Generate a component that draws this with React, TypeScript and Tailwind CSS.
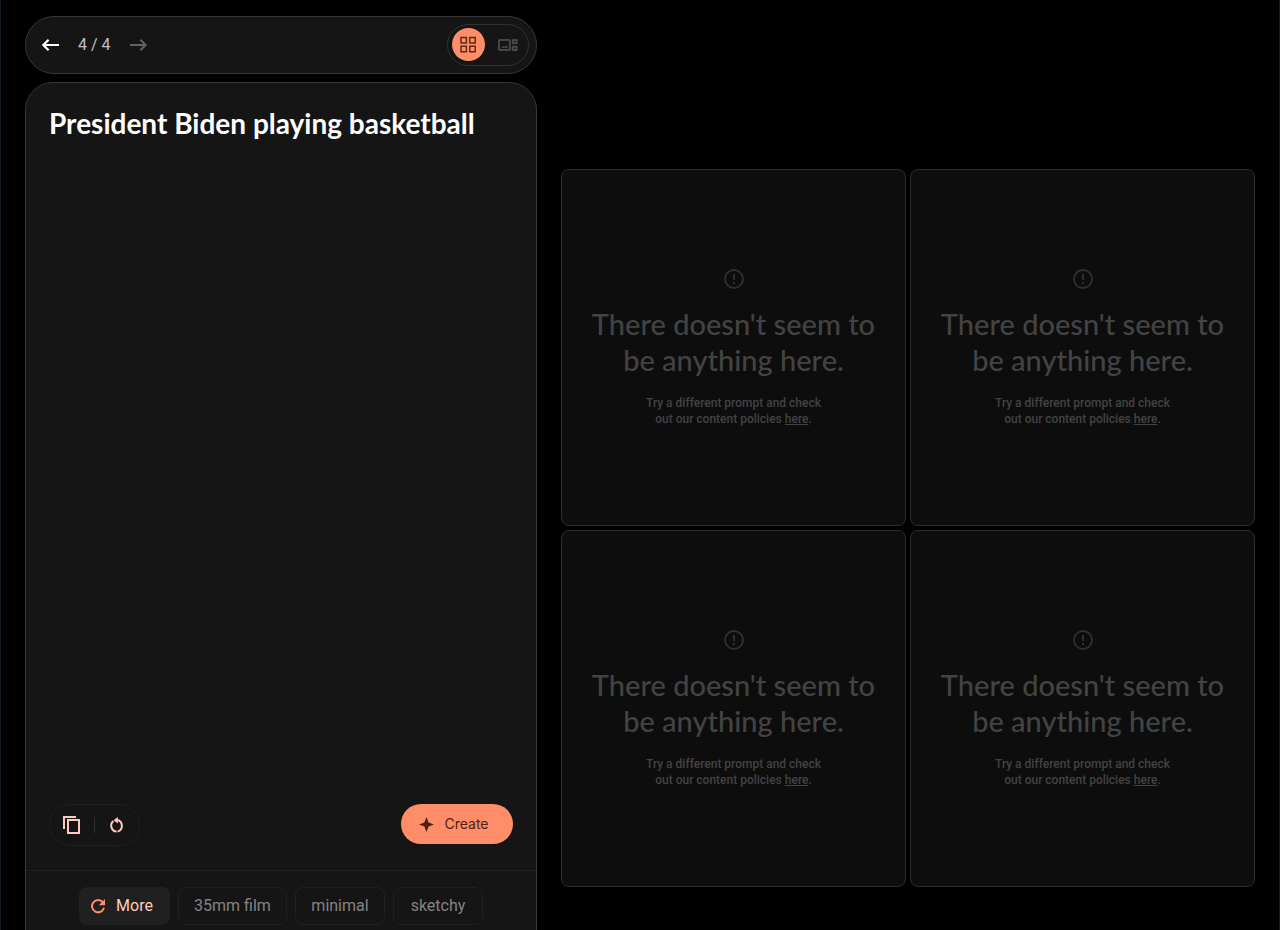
import React, { useState } from 'react';

interface Chip {
  label: string;
  width: string;
}

const chips: Chip[] = [
  { label: '35mm film', width: 'w-[109px]' },
  { label: 'minimal', width: 'w-[90px]' },
  { label: 'sketchy', width: 'w-[90px]' },
];

const ArrowIcon: React.FC<{ className?: string; strokeWidth: number }> = ({ className, strokeWidth }) => (
  <svg className={className} width="17" height="12" viewBox="0 0 17 12" fill="none" stroke="currentColor" strokeWidth={strokeWidth} aria-hidden="true">
    <path d="M17 6H1.8M6.6.8 1.4 6l5.2 5.2" />
  </svg>
);

const GridIcon = () => (
  <svg width="17" height="17" viewBox="0 0 17 17" fill="none" stroke="currentColor" strokeWidth="1.5" aria-hidden="true">
    <path d="M1 1.5h5.4v5.4H1zM9.8 1.5h5.4v5.4H9.8zM1 10.3h5.4v5.4H1zM9.8 10.3h5.4v5.4H9.8z" />
  </svg>
);

const GalleryIcon = () => (
  <svg width="20" height="12" viewBox="0 0 20 12" fill="none" stroke="currentColor" aria-hidden="true">
    <rect x="1" y="1" width="10.8" height="10" rx="0.8" strokeWidth="2" />
    <path d="M3.2 9 5 6.8l1.3 1.4L8 6l2 3z" fill="currentColor" stroke="none" />
    <rect x="14.8" y="1" width="3.8" height="3.2" strokeWidth="2" />
    <rect x="14.8" y="7.8" width="3.8" height="3.2" strokeWidth="2" />
  </svg>
);

const CopyIcon = () => (
  <svg width="18" height="18" viewBox="0 0 18 18" fill="none" stroke="currentColor" strokeWidth="2" aria-hidden="true">
    <path d="M5 4h11v13H5z" />
    <path d="M1 13V1h12" />
  </svg>
);

const ResetIcon = () => (
  <svg width="16" height="16" viewBox="0 0 16 16" aria-hidden="true">
    <path d="M4.4 4A6 6 0 0 0 7.6 14.6M8.6 14.6A6 6 0 0 0 8.2 3" fill="none" stroke="currentColor" strokeWidth="2" />
    <path d="M8.8 0v6.4L4.6 3.2z" fill="currentColor" />
  </svg>
);

const MoreIcon = () => (
  <svg width="16" height="16" viewBox="0 0 16 16" aria-hidden="true">
    <path d="M12.9 4.4A6.1 6.1 0 1 0 14 9.8" fill="none" stroke="currentColor" strokeWidth="2" />
    <path d="M15 1v6.2H8.8z" fill="currentColor" />
  </svg>
);

const SparkIcon = () => (
  <svg width="15" height="15" viewBox="0 0 15 15" fill="currentColor" aria-hidden="true">
    <path d="M7.5 0 9.6 5.4 15 7.5 9.6 9.6 7.5 15 5.4 9.6 0 7.5 5.4 5.4z" />
  </svg>
);

const ErrorIcon = () => (
  <svg width="20" height="20" viewBox="0 0 20 20" fill="none" stroke="currentColor" aria-hidden="true">
    <circle cx="10" cy="10" r="9" strokeWidth="1.8" />
    <path d="M10 5v6M10 13v2" strokeWidth="2" />
  </svg>
);

const EmptyCard = () => (
  <div className="flex h-[357px] flex-col items-center rounded-lg border border-[#2d2d2d] bg-[#0d0d0d] px-6 pt-[99px] text-center text-[#434343]">
    <div className="text-[#303030]">
      <ErrorIcon />
    </div>
    <h2 className="mt-[17px] max-w-[296px] font-['Lato',sans-serif] text-[29px] leading-9 font-medium">There doesn't seem to be anything here.</h2>
    <p className="mt-[17px] text-xs leading-4 font-medium">
      Try a different prompt and check
      <br />
      out our content policies <a href="#policies" className="underline">here</a>.
    </p>
  </div>
);

const App: React.FC = () => {
  const [prompt, setPrompt] = useState<string>('President Biden playing basketball');

  return (
    <div className="h-screen overflow-hidden border-x border-l-[#101b24] border-r-[#1c1c1c] bg-black font-['Roboto',sans-serif]">
      <main className="flex h-[1056px] gap-6 px-6 py-4">
        <section className="flex w-[40vw] shrink-0 flex-col gap-2">
          <nav className="flex h-[58px] shrink-0 items-center justify-between rounded-full border border-[#373737] bg-[#151515] pr-[7px] pl-4">
            <div className="flex items-center gap-[19px]">
              <button type="button" aria-label="Previous" className="text-white">
                <ArrowIcon strokeWidth={2.2} />
              </button>
              <span className="text-base text-[#bdc1c6]">4 / 4</span>
              <button type="button" aria-label="Next" className="text-[#5f6368]">
                <ArrowIcon className="rotate-180" strokeWidth={2} />
              </button>
            </div>
            <div className="flex h-[42px] items-start rounded-full border border-[#303030] px-1 pt-[3px]">
              <button type="button" aria-label="Grid view" className="flex size-[33px] items-center justify-center rounded-full bg-[#ff8d68] text-[#5c2c18]">
                <GridIcon />
              </button>
              <button type="button" aria-label="Gallery view" className="flex h-[33px] w-[39px] items-center justify-center pl-[7px] text-[#484848]">
                <GalleryIcon />
              </button>
            </div>
          </nav>

          <div className="flex flex-1 flex-col rounded-t-[28px] border border-[#373737] bg-[#151515]">
            <div className="flex flex-1 flex-col px-[23px] pt-[22px] pb-6">
              <textarea
                aria-label="Prompt"
                spellCheck={false}
                value={prompt}
                onChange={(e) => setPrompt(e.target.value)}
                className="w-full flex-1 resize-none bg-transparent font-['Lato',sans-serif] text-[28px] leading-9 font-bold text-white outline-none"
              />
              <div className="flex items-start justify-between">
                <div className="flex h-[42px] items-center rounded-full border border-[#202020] text-[#ffccba]">
                  <button type="button" aria-label="Copy prompt" className="flex h-10 w-11 items-center justify-center">
                    <CopyIcon />
                  </button>
                  <span className="h-4 w-px bg-[#303030]" />
                  <button type="button" aria-label="Start over" className="flex h-10 w-11 items-center justify-center">
                    <ResetIcon />
                  </button>
                </div>
                <button type="button" className="flex h-10 w-28 items-center justify-center gap-[10px] rounded-full bg-[#ff8d68] pr-[6px] font-['Inter',sans-serif] text-sm text-[#4b2112]">
                  <SparkIcon />
                  Create
                </button>
              </div>
            </div>

            <div className="flex h-[169px] justify-center gap-2 border-t border-[#222222] pt-4">
              <button type="button" className="flex h-[38px] w-[91px] items-center justify-center gap-[10px] rounded-lg bg-[#202020] pr-[6px] text-[#ffccba]">
                <span className="text-[#ff8d68]">
                  <MoreIcon />
                </span>
                More
              </button>
              {chips.map((chip) => (
                <button key={chip.label} type="button" className={`${chip.width} h-[38px] rounded-lg border border-[#202020] text-[#848484]`}>
                  {chip.label}
                </button>
              ))}
            </div>
          </div>
        </section>

        <section className="grid flex-1 grid-cols-2 content-center gap-1">
          <EmptyCard />
          <EmptyCard />
          <EmptyCard />
          <EmptyCard />
        </section>
      </main>
    </div>
  );
};

export default App;
